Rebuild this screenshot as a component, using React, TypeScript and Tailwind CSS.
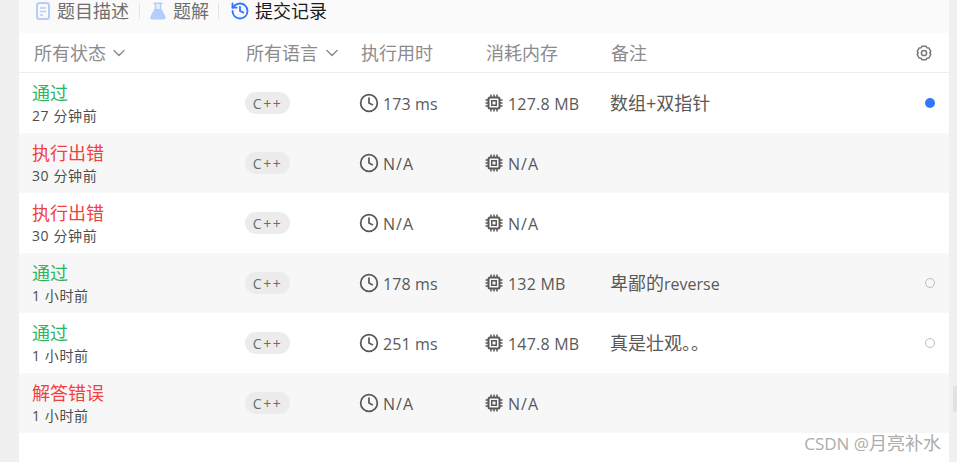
import { ChevronDown, Clock, History } from "lucide-react";

type Row = {
  status: string;
  ok: boolean;
  ago: string;
  time: string;
  memory: string;
  note?: React.ReactNode;
  dot?: "filled" | "ring";
};

const rows: Row[] = [
  { status: "通过", ok: true, ago: "27 分钟前", time: "173 ms", memory: "127.8 MB", note: "数组+双指针", dot: "filled" },
  { status: "执行出错", ok: false, ago: "30 分钟前", time: "N/A", memory: "N/A" },
  { status: "执行出错", ok: false, ago: "30 分钟前", time: "N/A", memory: "N/A" },
  {
    status: "通过",
    ok: true,
    ago: "1 小时前",
    time: "178 ms",
    memory: "132 MB",
    note: (
      <>
        卑鄙的<span className="text-[16px]">reverse</span>
      </>
    ),
    dot: "ring",
  },
  { status: "通过", ok: true, ago: "1 小时前", time: "251 ms", memory: "147.8 MB", note: "真是壮观。。", dot: "ring" },
  { status: "解答错误", ok: false, ago: "1 小时前", time: "N/A", memory: "N/A" },
];

const columns = "grid grid-cols-[212px_115px_125px_125px_1fr_26px] pl-[14px]";

function ChipIcon() {
  return (
    <svg width="18" height="18" viewBox="0 0 18 18" fill="none" stroke="#595959" className="shrink-0">
      <rect x="3.5" y="3.5" width="11" height="11" rx="1.5" strokeWidth="2" />
      <rect x="6.75" y="6.75" width="4.5" height="4.5" strokeWidth="1.5" />
      <path d="M6 0.5v2.5M9 0.5v2.5M12 0.5v2.5M6 15v2.5M9 15v2.5M12 15v2.5M0.5 6h2.5M0.5 9h2.5M0.5 12h2.5M15 6h2.5M15 9h2.5M15 12h2.5" strokeWidth="1.5" />
    </svg>
  );
}

function GearIcon() {
  return (
    <svg width="18" height="18" viewBox="0 0 18 18" fill="none" stroke="#7a7a7a" strokeWidth="1.5" strokeLinejoin="round">
      <path d="M7 2.2h4l.9 1.6 1.9.1 2 3.4-1 1.7 1 1.7-2 3.4-1.9.1-.9 1.6H7l-.9-1.6-1.9-.1-2-3.4 1-1.7-1-1.7 2-3.4 1.9-.1z" />
      <circle cx="9" cy="9" r="2.6" />
    </svg>
  );
}

function DocIcon() {
  return (
    <svg width="14" height="18" viewBox="0 0 14 18" fill="none" stroke="#b5cdfb" strokeWidth="2" className="shrink-0">
      <rect x="1" y="1" width="12" height="16" rx="2.5" />
      <path d="M4 6h6M4 9.5h6M4 13h3" strokeWidth="1.5" />
    </svg>
  );
}

function FlaskIcon() {
  return (
    <svg width="16" height="18" viewBox="0 0 16 18" className="shrink-0">
      <path d="M3.5 0.5h9v1.5h-1.2v4.5l4.2 8c.6 1.4-.2 3-1.8 3H2.3c-1.6 0-2.4-1.6-1.8-3l4.2-8V2H3.5z" fill="#b5cdfb" />
      <rect x="6.2" y="2" width="3.6" height="5" fill="#e6eefd" />
    </svg>
  );
}

function SubmissionRow({ row, shaded }: { row: Row; shaded: boolean }) {
  return (
    <div className={`${columns} h-[60px] items-center text-[16px] text-[#595959] ${shaded ? "bg-[#f7f7f7]" : "bg-white"}`}>
      <div className="-ml-px mt-[2px] flex flex-col">
        <span className={`text-[18px] leading-[24px] ${row.ok ? "text-[#2db55d]" : "text-[#f0413e]"}`}>{row.status}</span>
        <span className="text-[14px] leading-[22px] tracking-[0.6px] text-[#4d4d4d]">{row.ago}</span>
      </div>
      <div className="flex">
        <span className="flex h-[22px] w-[45px] items-center justify-center rounded-full bg-[#ececec] pt-px text-[14px] tracking-[1.5px] text-[#6b6b6b]">
          C++
        </span>
      </div>
      <div className="flex items-center gap-[4px]">
        <Clock size={20} strokeWidth={2.1} className="-ml-px text-[#595959]" />
        <span className={`mt-[2px] ${row.time === "N/A" ? "tracking-[1px]" : "tracking-[0.1px]"}`}>{row.time}</span>
      </div>
      <div className="flex items-center gap-[5px]">
        <ChipIcon />
        <span className={`mt-[2px] ${row.memory === "N/A" ? "tracking-[1px]" : "tracking-[0.2px]"}`}>{row.memory}</span>
      </div>
      <div className="text-[18px]">{row.note}</div>
      <div className="flex">
        {row.dot === "filled" && <div className="ml-[2px] h-[10px] w-[10px] rounded-full bg-[#3377ff]" />}
        {row.dot === "ring" && <div className="ml-[2px] h-[10px] w-[10px] rounded-full border border-[#bdbdbd]" />}
      </div>
    </div>
  );
}

export default function App() {
  return (
    <div
      className="flex h-[462px] w-[957px] overflow-hidden bg-[#f0f0f0]"
      style={{ fontFamily: '"Open Sans", "Noto Sans CJK SC", sans-serif' }}
    >
      <div className="ml-[19px] w-[930px] bg-white">
        <div className="flex h-[33px] items-center bg-[#fafafa] pb-[11px] pl-[17px] text-[18px] text-[#6e6e6e]">
          <DocIcon />
          <span className="ml-[7px]">题目描述</span>
          <div className="mx-[10px] h-[16px] w-px bg-[#e5e5e5]" />
          <FlaskIcon />
          <span className="ml-[7px]">题解</span>
          <div className="mx-[9px] h-[16px] w-px bg-[#e5e5e5]" />
          <div className="ml-[2px]">
            <History size={20} strokeWidth={2.2} className="text-[#3377ff]" />
          </div>
          <span className="ml-[5px] text-[#1a1a1a]">提交记录</span>
        </div>

        <div className={`${columns} h-[40px] items-center border-b border-[#ededed] pt-px text-[18px] text-[#8c8c8c]`}>
          <div className="ml-px flex items-center gap-[3px]">
            <span>所有状态</span>
            <ChevronDown size={20} strokeWidth={1.7} />
          </div>
          <div className="ml-px flex items-center gap-[4px]">
            <span>所有语言</span>
            <ChevronDown size={20} strokeWidth={1.7} />
          </div>
          <div className="ml-px">执行用时</div>
          <div className="ml-px">消耗内存</div>
          <div className="ml-px">备注</div>
          <div className="-ml-[8px]">
            <GearIcon />
          </div>
        </div>

        {rows.map((row, i) => (
          <SubmissionRow key={i} row={row} shaded={i % 2 === 1} />
        ))}

        <div className="pr-[8px] text-right text-[18px] leading-[20px] text-[#adadad]">
          <span className="text-[17px]">CSDN @</span>月亮补水
        </div>
      </div>
      <div className="flex w-[8px] flex-col">
        <div className="mt-[386px] h-[26px] w-[4px] self-end bg-[#e2e2e2]" />
      </div>
    </div>
  );
}
